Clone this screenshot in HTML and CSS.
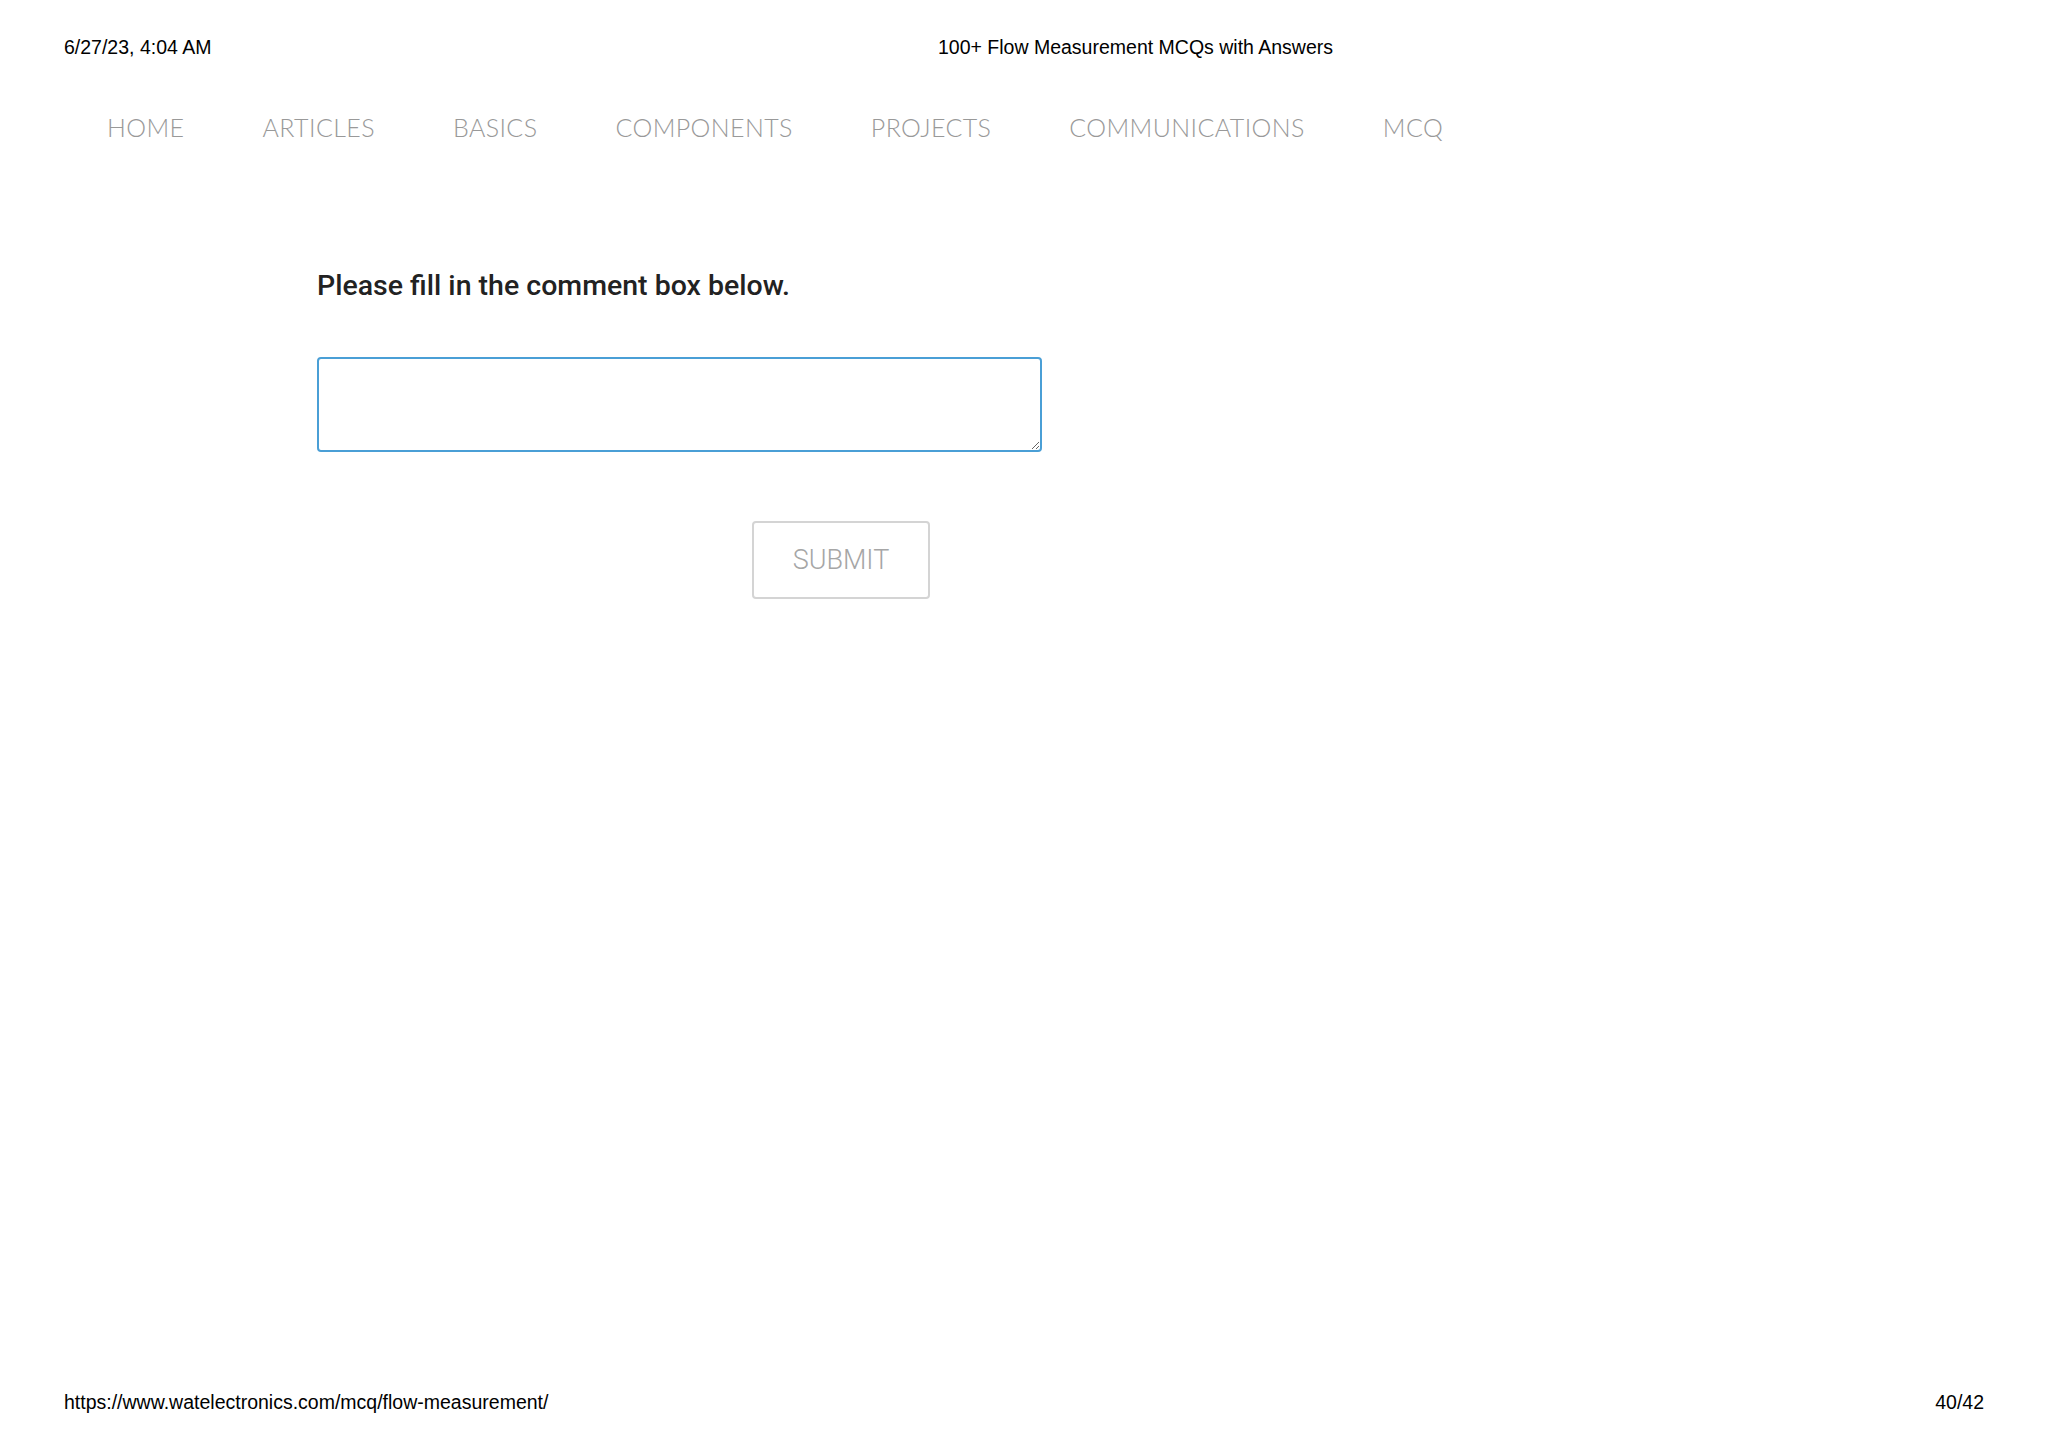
FILE: index.html
```html
<!DOCTYPE html>
<html>
<head>
    <meta charset="UTF-8">
    <title>100+ Flow Measurement MCQs with Answers</title>
    <link rel="stylesheet" href="styles.css">
</head>
<body>
    <div class="page">
        <div class="print_head">
            <span>6/27/23, 4:04 AM</span>
            <span>100+ Flow Measurement MCQs with Answers</span>
        </div>
        <ul class="nav">
            <li><a href="javascript:;">HOME</a></li>
            <li><a href="javascript:;">ARTICLES</a></li>
            <li><a href="javascript:;">BASICS</a></li>
            <li><a href="javascript:;">COMPONENTS</a></li>
            <li><a href="javascript:;">PROJECTS</a></li>
            <li><a href="javascript:;">COMMUNICATIONS</a></li>
            <li><a href="javascript:;">MCQ</a></li>
        </ul>
        <form class="comment">
            <h3>Please fill in the comment box below.</h3>
            <textarea class="comment_box"></textarea>
            <div class="actions">
                <button type="button" class="submit">SUBMIT</button>
            </div>
        </form>
        <div class="print_foot">
            <span>https://www.watelectronics.com/mcq/flow-measurement/</span>
            <span>40/42</span>
        </div>
    </div>
</body>
</html>
```

FILE: styles.css
```css
* {
    margin: 0;
    padding: 0;
}
a {
    text-decoration: none;
}
body {
    background: #fff;
}
.page {
    display: flex;
    flex-direction: column;
    height: 1447px;
    padding: 0 64px;
    box-sizing: border-box;
}
.print_head,
.print_foot {
    font-family: "Liberation Sans", Arial, sans-serif;
    font-size: 19.5px;
    line-height: 22px;
    color: #000;
}
.print_head {
    display: grid;
    grid-template-columns: 874px 1fr;
    padding-top: 36px;
}
.print_foot {
    display: flex;
    justify-content: space-between;
    margin-top: auto;
    padding-bottom: 34px;
}
.nav {
    display: flex;
    gap: 78px;
    list-style: none;
    margin: 54px 0 0 43px;
}
.nav a {
    font-family: Lato, "Open Sans", sans-serif;
    font-weight: 300;
    font-size: 25px;
    line-height: 30px;
    letter-spacing: 0.4px;
    color: #999;
}
.comment {
    width: 1048px;
    margin: 127px 0 0 253px;
}
.comment h3 {
    font-family: Roboto, "Liberation Sans", sans-serif;
    font-weight: 500;
    font-size: 28.5px;
    line-height: 34px;
    color: #222;
}
.comment_box {
    display: block;
    width: 725px;
    height: 95px;
    margin-top: 54px;
    box-sizing: border-box;
    border: 2px solid #4a9fd6;
    border-radius: 4px;
    outline: none;
    font-family: Roboto, sans-serif;
    font-size: 18px;
}
.actions {
    display: flex;
    justify-content: center;
    margin-top: 69px;
}
.submit {
    width: 178px;
    height: 78px;
    background: #fff;
    border: 2px solid #d4d4d4;
    border-radius: 4px;
    font-family: Roboto, sans-serif;
    font-weight: 300;
    font-size: 27px;
    color: #a6a6a6;
    cursor: pointer;
}
```
